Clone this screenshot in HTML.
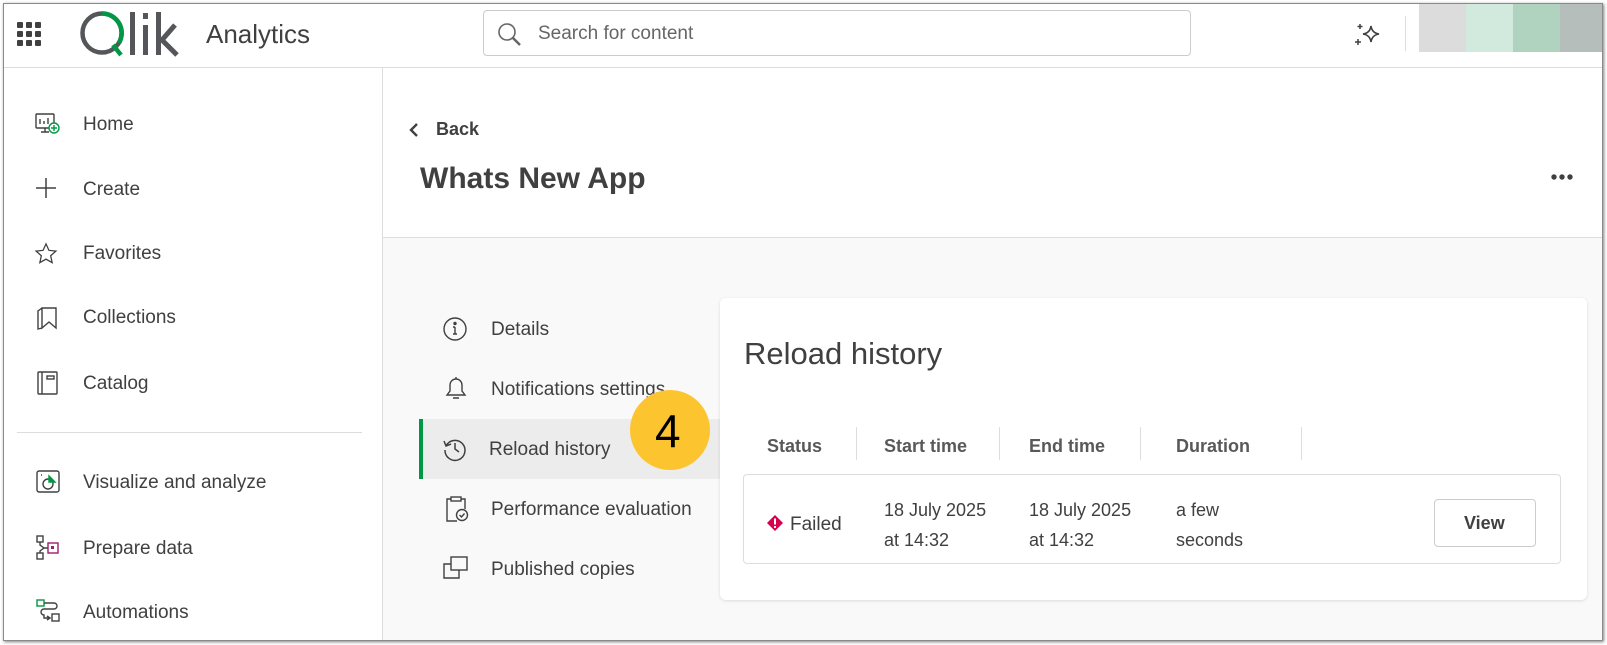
<!DOCTYPE html>
<html><head><meta charset="utf-8"><style>
*{box-sizing:border-box;margin:0;padding:0}
body{width:1607px;height:645px;background:#fff;font-family:"Liberation Sans",sans-serif;color:#404040;position:relative;overflow:hidden}
.frame{position:absolute;left:3px;top:3px;width:1600px;height:638px;border:1px solid #8a8a8a;box-shadow:1px 1px 3px rgba(0,0,0,.5);overflow:hidden;background:#fff}
.a{position:absolute}
.t{position:absolute;white-space:nowrap;line-height:1}
svg{position:absolute;overflow:visible}
</style></head><body>
<div class="frame">
<div class="a" style="left:0;top:0;width:1600px;height:64px;border-bottom:1px solid #ddd;background:#fff"></div>
<svg style="left:13px;top:18px" width="24" height="24" viewBox="0 0 24 24" fill="#404040">
<rect x="0" y="0" width="6" height="6" rx="1"/><rect x="9" y="0" width="6" height="6" rx="1"/><rect x="18" y="0" width="6" height="6" rx="1"/>
<rect x="0" y="9" width="6" height="6" rx="1"/><rect x="9" y="9" width="6" height="6" rx="1"/><rect x="18" y="9" width="6" height="6" rx="1"/>
<rect x="0" y="18" width="6" height="6" rx="1"/><rect x="9" y="18" width="6" height="6" rx="1"/><rect x="18" y="18" width="6" height="6" rx="1"/></svg>
<svg style="left:75px;top:6px" width="102" height="48" viewBox="0 0 102 48">
<circle cx="23" cy="23" r="19.5" fill="none" stroke="#54565a" stroke-width="4.5"/>
<path d="M23 3.5 A19.5 19.5 0 0 1 40 33" fill="none" stroke="#009845" stroke-width="4.5"/>
<path d="M34 35 L42 45" stroke="#009845" stroke-width="4.5"/>
<rect x="51" y="2" width="5" height="43" fill="#54565a"/>
<rect x="64" y="15" width="5" height="30" fill="#54565a"/><rect x="64" y="3" width="5" height="6" fill="#54565a"/>
<rect x="77" y="2" width="5" height="43" fill="#54565a"/>
<path d="M96 15 L83 30 L98 45" fill="none" stroke="#54565a" stroke-width="5"/></svg>
<div class="t" style="left:202px;top:17px;font-size:26px;color:#404040">Analytics</div>
<div class="a" style="left:479px;top:6px;width:708px;height:46px;border:1px solid #ccc;border-radius:4px"></div>
<svg style="left:494px;top:19px" width="24" height="24" viewBox="0 0 24 24" fill="none" stroke="#666" stroke-width="1.6"><circle cx="9" cy="9" r="8"/><path d="M15 15 L22 22" stroke-width="2.5"/></svg>
<div class="t" style="left:534px;top:20px;font-size:19px;color:#666">Search for content</div>
<svg style="left:1351px;top:18px" width="26" height="26" viewBox="0 0 26 26" fill="none" stroke="#404040" stroke-width="1.6"><path d="M16 4 Q17 11 24 12 Q17 13 16 20 Q15 13 8 12 Q15 11 16 4Z"/><path d="M5 2v5M2.5 4.5h5M3 17v6M0 20h6" stroke-width="1.5"/></svg>
<div class="a" style="left:1401px;top:12px;width:1px;height:35px;background:#ddd"></div>
<div class="a" style="left:1415px;top:0;width:47px;height:48px;background:#dcdcdc"></div>
<div class="a" style="left:1462px;top:0;width:47px;height:48px;background:#d2e9dd"></div>
<div class="a" style="left:1509px;top:0;width:47px;height:48px;background:#b0d3c0"></div>
<div class="a" style="left:1556px;top:0;width:44px;height:48px;background:#b5bebb"></div>
<div class="a" style="left:0;top:64px;width:379px;height:580px;border-right:1px solid #ddd;background:#fff"></div>
<svg style="left:31px;top:109px" width="26" height="26" viewBox="0 0 26 26" fill="none" stroke="#404040" stroke-width="1.4"><rect x="1" y="1" width="18" height="14" rx="1"/><path d="M10 15v4M6 19h8M5 11V6M9 11V8M13 11V5"/><circle cx="19" cy="15" r="5" fill="#fff" stroke="#009845"/><path d="M19 12v6M16 15h6" stroke="#009845"/></svg>
<div class="t" style="left:79px;top:111px;font-size:19px">Home</div>
<svg style="left:32px;top:174px" width="20" height="20" viewBox="0 0 20 20" stroke="#404040" stroke-width="1.5"><path d="M10 0v20M0 10h20"/></svg>
<div class="t" style="left:79px;top:176px;font-size:19px">Create</div>
<svg style="left:31px;top:239px" width="22" height="22" viewBox="0 0 24 24" fill="none" stroke="#404040" stroke-width="1.4"><path d="M12 1l3.2 7 7.6.8-5.7 5.1 1.6 7.5L12 17.6 5.3 21.4l1.6-7.5L1.2 8.8 8.8 8z"/></svg>
<div class="t" style="left:79px;top:240px;font-size:19px">Favorites</div>
<svg style="left:32px;top:302px" width="22" height="24" viewBox="0 0 22 24" fill="none" stroke="#404040" stroke-width="1.4"><path d="M6 2h14v20l-7-6-7 6zM6 2L2 5v18l4-1"/></svg>
<div class="t" style="left:79px;top:304px;font-size:19px">Collections</div>
<svg style="left:33px;top:367px" width="22" height="24" viewBox="0 0 22 24" fill="none" stroke="#404040" stroke-width="1.4"><rect x="1" y="1" width="19" height="22" rx="1"/><path d="M5 1v22"/><rect x="10" y="5" width="7" height="3"/></svg>
<div class="t" style="left:79px;top:370px;font-size:19px">Catalog</div>
<div class="a" style="left:13px;top:428px;width:345px;height:1px;background:#ddd"></div>
<svg style="left:32px;top:466px" width="26" height="24" viewBox="0 0 26 24" fill="none" stroke="#404040" stroke-width="1.4"><rect x="1" y="1" width="22" height="21" rx="2"/><path d="M5 5h1"/><circle cx="12" cy="14" r="5"/><path d="M13 6v6h6z" fill="#009845" stroke="#009845"/></svg>
<div class="t" style="left:79px;top:469px;font-size:19px">Visualize and analyze</div>
<svg style="left:32px;top:531px" width="28" height="26" viewBox="0 0 28 26" fill="none" stroke="#404040" stroke-width="1.4"><rect x="1" y="1" width="6" height="6"/><rect x="1" y="18" width="6" height="6"/><path d="M4 7v3l4 3-4 3v2M8 13h4"/><rect x="12" y="8" width="10" height="10" stroke="#9c1e6b"/><rect x="15" y="11" width="3" height="3" fill="#9c1e6b" stroke="none"/></svg>
<div class="t" style="left:79px;top:535px;font-size:19px">Prepare data</div>
<svg style="left:32px;top:595px" width="28" height="26" viewBox="0 0 28 26" fill="none" stroke="#404040" stroke-width="1.4"><rect x="1" y="1" width="7" height="6" stroke="#009845"/><path d="M8 4h10a3 3 0 0 1 0 6H8a3 3 0 0 0 0 6v3h6M11 17l3 2-3 2"/><rect x="16" y="15" width="7" height="7"/></svg>
<div class="t" style="left:79px;top:599px;font-size:19px">Automations</div>
<div class="a" style="left:379px;top:64px;width:1221px;height:170px;background:#fff;border-bottom:1px solid #ddd"></div>
<div class="a" style="left:379px;top:234px;width:1221px;height:410px;background:#f9f9f9"></div>
<svg style="left:405px;top:118px" width="10" height="16" viewBox="0 0 10 16" fill="none" stroke="#404040" stroke-width="2.4"><path d="M8 2L2 8l6 6"/></svg>
<div class="t" style="left:432px;top:116px;font-size:18px;font-weight:bold">Back</div>
<div class="t" style="left:416px;top:160px;font-size:30px;font-weight:bold">Whats New App</div>
<svg style="left:1547px;top:170px" width="24" height="6" viewBox="0 0 24 6" fill="#404040"><circle cx="3" cy="3" r="2.7"/><circle cx="11" cy="3" r="2.7"/><circle cx="19" cy="3" r="2.7"/></svg>
<div class="a" style="left:419px;top:415px;width:300px;height:60px;background:#ececec"></div>
<div class="a" style="left:415px;top:415px;width:4px;height:60px;background:#009845"></div>
<svg style="left:439px;top:313px" width="24" height="24" viewBox="0 0 24 24" fill="none" stroke="#404040" stroke-width="1.4"><circle cx="12" cy="12" r="11"/><path d="M12 10v7M10 17h4M10 10h2"/><circle cx="12" cy="6.5" r="1" fill="#404040"/></svg>
<div class="t" style="left:487px;top:316px;font-size:19px">Details</div>
<svg style="left:441px;top:373px" width="22" height="24" viewBox="0 0 22 24" fill="none" stroke="#404040" stroke-width="1.4"><path d="M11 2a6 6 0 0 1 6 6v6l3 4H2l3-4V8a6 6 0 0 1 6-6zM8 21h6M11 0v2"/></svg>
<div class="t" style="left:487px;top:376px;font-size:19px">Notifications settings</div>
<svg style="left:439px;top:433px" width="24" height="24" viewBox="0 0 24 24" fill="none" stroke="#404040" stroke-width="1.5"><path d="M3 9A10 10 0 1 1 2 13M1 4l2 5 5-2M12 6v6l4 3"/></svg>
<div class="t" style="left:485px;top:436px;font-size:19px">Reload history</div>
<svg style="left:441px;top:492px" width="24" height="26" viewBox="0 0 24 26" fill="none" stroke="#404040" stroke-width="1.4"><path d="M6 3H2v22h10M16 3h4v10"/><rect x="6" y="1" width="10" height="4"/><circle cx="17" cy="19" r="5.5"/><path d="M14.5 19l2 2 3-3.5"/></svg>
<div class="t" style="left:487px;top:496px;font-size:19px">Performance evaluation</div>
<svg style="left:439px;top:552px" width="26" height="24" viewBox="0 0 26 24" fill="none" stroke="#404040" stroke-width="1.4"><rect x="8" y="1" width="16" height="13"/><path d="M8 8H1v14h15v-8"/></svg>
<div class="t" style="left:487px;top:556px;font-size:19px">Published copies</div>
<div class="a" style="left:716px;top:294px;width:867px;height:302px;background:#fff;border-radius:6px;box-shadow:0 1px 3px rgba(0,0,0,.12)"></div>
<div class="a" style="left:626px;top:386px;width:80px;height:80px;border-radius:50%;background:#fcc530"></div>
<div class="t" style="left:651px;top:404px;font-size:46px;color:#000">4</div>
<div class="t" style="left:740px;top:334px;font-size:31px;color:#404040">Reload history</div>
<div class="t" style="left:763px;top:433px;font-size:18px;font-weight:bold;color:#595959">Status</div>
<div class="a" style="left:852px;top:423px;width:1px;height:33px;background:#ddd"></div>
<div class="t" style="left:880px;top:433px;font-size:18px;font-weight:bold;color:#595959">Start time</div>
<div class="a" style="left:995px;top:423px;width:1px;height:33px;background:#ddd"></div>
<div class="t" style="left:1025px;top:433px;font-size:18px;font-weight:bold;color:#595959">End time</div>
<div class="a" style="left:1136px;top:423px;width:1px;height:33px;background:#ddd"></div>
<div class="t" style="left:1172px;top:433px;font-size:18px;font-weight:bold;color:#595959">Duration</div>
<div class="a" style="left:1297px;top:423px;width:1px;height:33px;background:#ddd"></div>
<div class="a" style="left:739px;top:470px;width:818px;height:90px;border:1px solid #ddd;border-radius:4px"></div>
<svg style="left:763px;top:511px" width="16" height="16" viewBox="0 0 16 16"><path d="M8 0l8 8-8 8-8-8z" fill="#d6004f"/><path d="M8 3.5v6" stroke="#fff" stroke-width="2"/><circle cx="8" cy="12" r="1.1" fill="#fff"/></svg>
<div class="t" style="left:786px;top:511px;font-size:19px">Failed</div>
<div class="t" style="left:880px;top:497px;font-size:18px">18 July 2025</div>
<div class="t" style="left:880px;top:527px;font-size:18px">at 14:32</div>
<div class="t" style="left:1025px;top:497px;font-size:18px">18 July 2025</div>
<div class="t" style="left:1025px;top:527px;font-size:18px">at 14:32</div>
<div class="t" style="left:1172px;top:497px;font-size:18px">a few</div>
<div class="t" style="left:1172px;top:527px;font-size:18px">seconds</div>
<div class="a" style="left:1430px;top:495px;width:102px;height:48px;border:1px solid #ccc;border-radius:4px"></div>
<div class="t" style="left:1460px;top:510px;font-size:18px;font-weight:bold">View</div>
</div>
</body></html>
